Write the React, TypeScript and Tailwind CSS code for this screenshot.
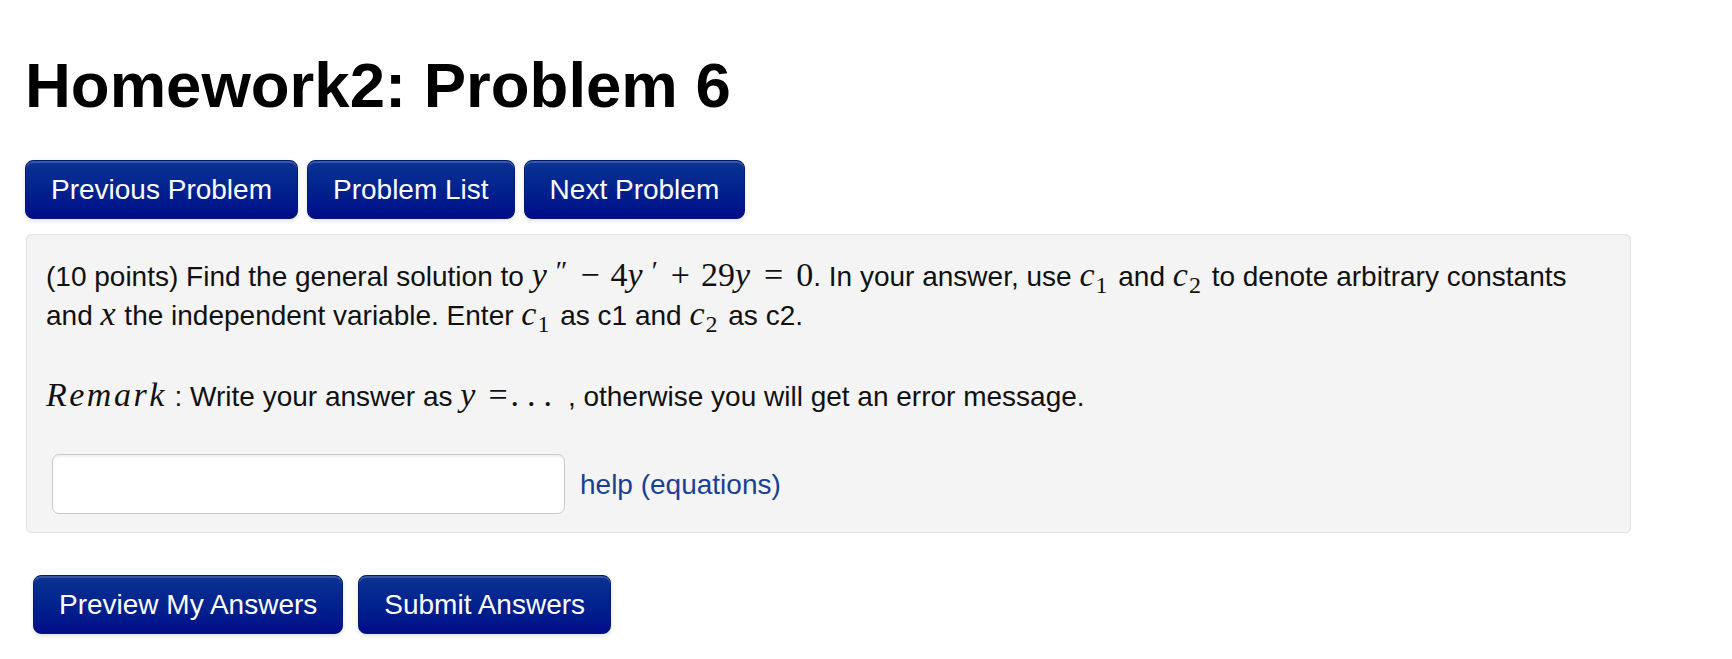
import React from "react";

const mathFont = "font-['Liberation_Serif','Times_New_Roman',serif]";

function Mi({ children, wide }: { children: React.ReactNode; wide?: boolean }) {
  return (
    <span
      className={`${mathFont} inline-block leading-[28px] italic text-[34px] ${wide ? "tracking-[2.5px]" : "tracking-[1px]"}`}
    >
      {children}
    </span>
  );
}
function Mn({ children }: { children: React.ReactNode }) {
  return <span className={`${mathFont} inline-block leading-[28px] text-[34px]`}>{children}</span>;
}
function Mo({ children, wide }: { children: React.ReactNode; wide?: boolean }) {
  return (
    <span
      className={`${mathFont} inline-block leading-[28px] text-[34px] ${wide ? "mx-[13px]" : "mx-[11px]"}`}
    >
      {children}
    </span>
  );
}
function Prime({ children }: { children: React.ReactNode }) {
  return (
    <span
      className={`${mathFont} inline-block leading-[20px] text-[28px] relative -top-[6px] ml-[8px] mr-[2px]`}
    >
      {children}
    </span>
  );
}
function Sub({ c, n }: { c: string; n: string }) {
  return (
    <span className="whitespace-nowrap mr-[3px]">
      <Mi>{c}</Mi>
      <span className={`${mathFont} inline-block leading-[18px] text-[24px] relative top-[7px]`}>{n}</span>
    </span>
  );
}

function NavButton({ children }: { children: React.ReactNode }) {
  return (
    <button className="h-[59px] px-[25px] rounded-[8px] border border-[#001c6e] bg-linear-to-b from-[#0c3292] to-[#000a89] text-white text-[28px] leading-none shadow-[inset_0_2px_0_rgba(255,255,255,0.18),0_2px_4px_rgba(0,0,0,0.12)] whitespace-nowrap">
      {children}
    </button>
  );
}

export default function App() {
  return (
    <div className="min-h-[659px] bg-white font-['Liberation_Sans','Helvetica',Arial,sans-serif] text-[#111] px-[25px]">
      <h1 className="pt-[54px] text-[63.5px] leading-[63px] font-bold text-black">
        Homework2: Problem 6
      </h1>

      <div className="mt-[43px] flex gap-[9px]">
        <NavButton>Previous Problem</NavButton>
        <NavButton>Problem List</NavButton>
        <NavButton>Next Problem</NavButton>
      </div>

      <div className="mt-[15px] w-[1605px] ml-[1px] rounded-[5px] border border-[#e2e2e2] bg-[#f4f4f4] shadow-[inset_0_1px_2px_rgba(0,0,0,0.04)] pt-[22px] px-[19px] pb-[18px] text-[28px] leading-[39px]">
        <p className="whitespace-nowrap">
          <span>(10 points) Find the general solution to </span>
          <Mi>y</Mi>
          <Prime>″</Prime>
          <Mo>−</Mo>
          <Mn>4</Mn>
          <Mi>y</Mi>
          <Prime>′</Prime>
          <Mo>+</Mo>
          <Mn>29</Mn>
          <Mi>y</Mi>
          <Mo wide>=</Mo>
          <Mn>0</Mn>
          <span>. In your answer, use </span>
          <Sub c="c" n="1" />
          <span> and </span>
          <Sub c="c" n="2" />
          <span> to denote arbitrary constants</span>
          <br />
          <span>and </span>
          <Mi>x</Mi>
          <span> the independent variable. Enter </span>
          <Sub c="c" n="1" />
          <span> as c1 and </span>
          <Sub c="c" n="2" />
          <span> as c2.</span>
        </p>
        <p className="mt-[42px] whitespace-nowrap">
          <Mi wide>Remark</Mi>
          <span> : Write your answer as </span>
          <Mi>y</Mi>
          <span className={`${mathFont} inline-block leading-[28px] text-[34px] ml-[12px]`}>=</span>
          <span className={`${mathFont} inline-block leading-[28px] text-[34px] tracking-[8px] ml-[3px]`}>...</span>
          <span> , otherwise you will get an error message.</span>
        </p>
        <div className="mt-[38px] flex items-center">
          <input
            type="text"
            className="ml-[6px] w-[513px] h-[60px] rounded-[7px] border border-[#c9c9c9] bg-white shadow-[inset_0_2px_2px_rgba(0,0,0,0.06)] outline-none"
          />
          <a href="#" className="ml-[15px] text-[28px] text-[#1b3f93] no-underline">
            help (equations)
          </a>
        </div>
      </div>

      <div className="mt-[42px] ml-[8px] flex gap-[15px]">
        <NavButton>Preview My Answers</NavButton>
        <NavButton>Submit Answers</NavButton>
      </div>
    </div>
  );
}
